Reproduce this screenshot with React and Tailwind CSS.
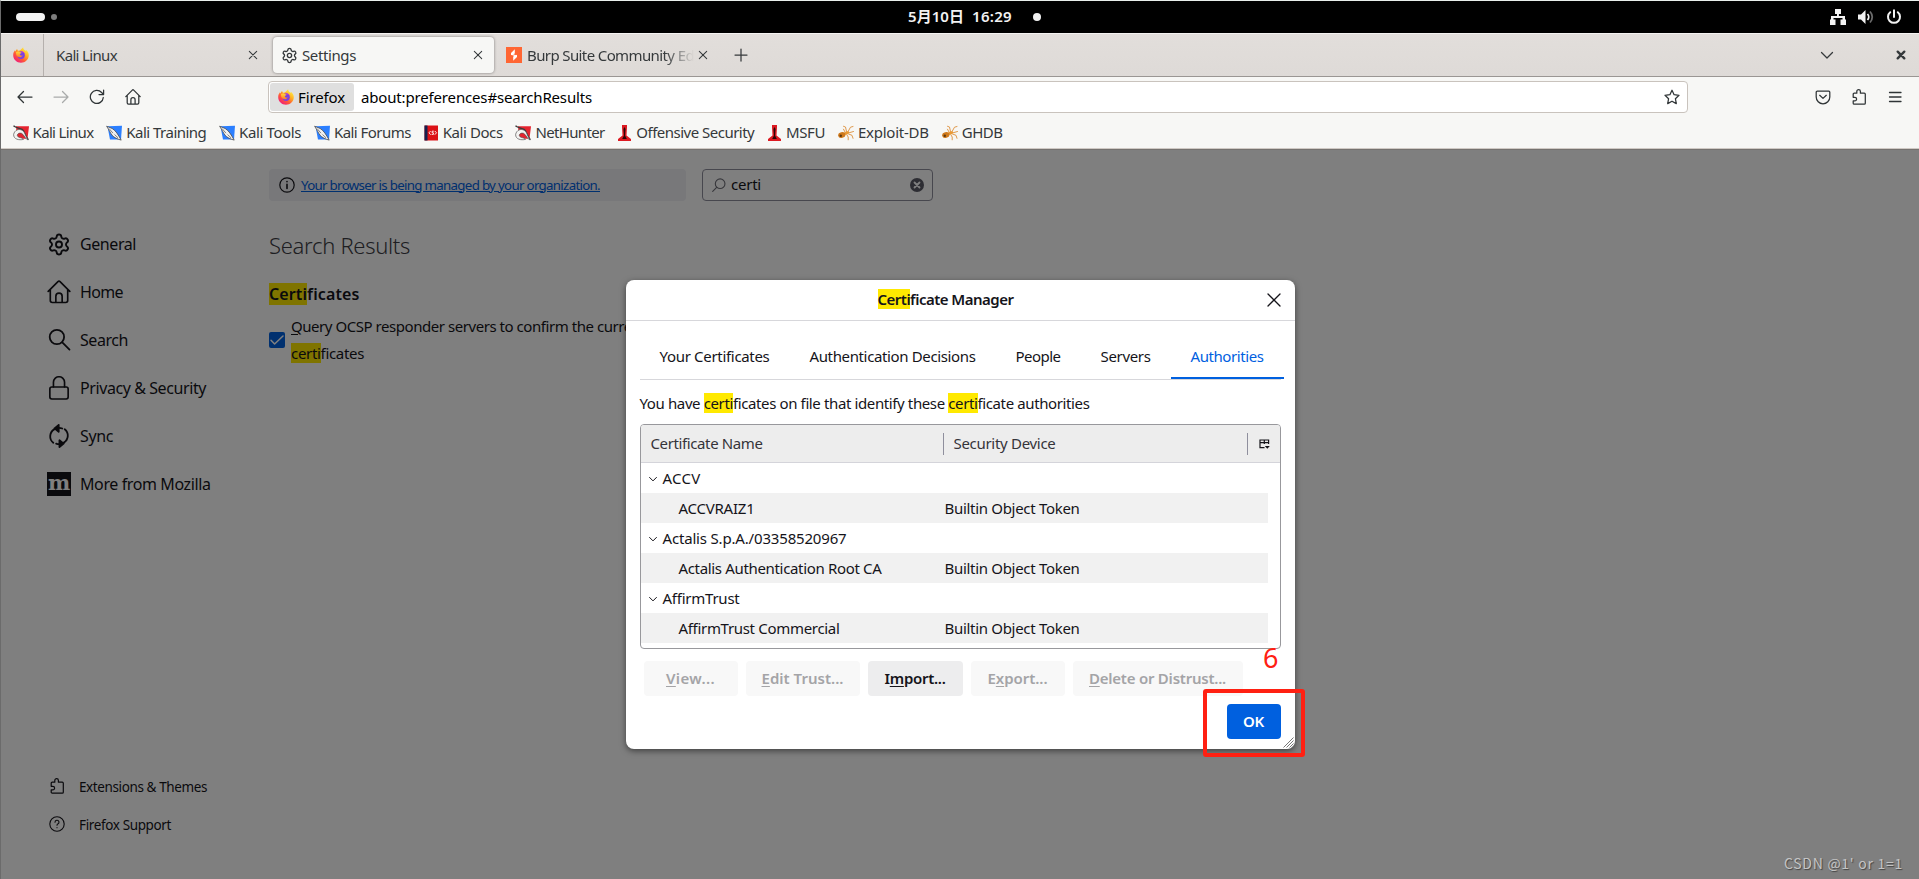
import { useLayoutEffect, useRef, useState } from "react";
import { Settings } from "lucide-react";

/* Single-line label whose letter spacing is adjusted to fill a given width. */
function Fit({ w, className = "", children }) {
  const ref = useRef(null);
  const [spacing, setSpacing] = useState(0);

  useLayoutEffect(() => {
    const el = ref.current;
    const natural = el.getBoundingClientRect().width;
    setSpacing((w - natural) / el.textContent.length);
  }, [w]);

  return (
    <span
      ref={ref}
      className={`inline-block shrink-0 whitespace-pre ${className}`}
      style={{ letterSpacing: `${spacing}px` }}
    >
      {children}
    </span>
  );
}

function Mark({ children }) {
  return <mark className="bg-[#ffe900] text-inherit">{children}</mark>;
}

function Stroke({ className = "", size = 16, width = 1.25, children }) {
  return (
    <svg
      className={`shrink-0 ${className}`}
      width={size}
      height={size}
      viewBox="0 0 16 16"
      fill="none"
      stroke="currentColor"
      strokeWidth={width}
      strokeLinecap="round"
      strokeLinejoin="round"
    >
      {children}
    </svg>
  );
}

function FirefoxLogo() {
  return (
    <svg className="size-4 shrink-0" viewBox="0 0 16 16">
      <defs>
        <linearGradient id="ff-body" x1="0.85" y1="0.1" x2="0.2" y2="0.95">
          <stop offset="0" stopColor="#fff04a" />
          <stop offset="0.35" stopColor="#ffae22" />
          <stop offset="0.65" stopColor="#ff5a36" />
          <stop offset="1" stopColor="#f0197c" />
        </linearGradient>
        <linearGradient id="ff-flame" x1="0.5" y1="0" x2="0.5" y2="1">
          <stop offset="0" stopColor="#ffd63b" />
          <stop offset="1" stopColor="#ff7a26" />
        </linearGradient>
      </defs>
      <path
        d="M10.2 0.2c0 1.8 1 2.5 2 3.3 0.6 0.3 1 0.2 1.1-0.5 1.6 1.4 2.5 3.3 2.5 5.3 0 4.2-3.5 7.5-7.8 7.5S0.2 12.5 0.2 8.3c0-2 0.6-3.5 1.7-5 0 0.5 0.2 0.9 0.5 1.2 0.3-1.1 0.9-2 1.8-2.6 0 0.8 0.3 1.5 0.9 1.9C7.6 3.6 8.6 1.6 10.2 0.2z"
        fill="url(#ff-body)"
      />
      <circle cx="8.1" cy="8.2" r="3.7" fill="#7a41e0" />
      <path d="M7 4.4c2.2-0.9 4.9 0.6 4.9 3.4 0-1-1-2-2.1-2z" fill="#b833e1" />
      <path
        d="M3 5.2c1-0.7 2.3-0.8 3.4-0.2 0.5 0.4 1.3 0.4 2.2 0.6-0.2 0.9-1.5 1-1.8 1.7 0 1.2 1.5 1.8 3 1-0.9 2-3.3 2.7-5.3 1.3C3.4 8.7 2.9 7 3 5.2z"
        fill="url(#ff-flame)"
      />
    </svg>
  );
}

function BurpLogo() {
  return (
    <svg className="size-4 shrink-0" viewBox="0 0 16 16">
      <rect width="16" height="16" fill="#ff6633" />
      <path d="M8.8 2.3v4.2L5 8.2V6zM7.2 13.7V9.5L11 7.8V10zM5 6.5l6 2v1.3l-6-2z" fill="#fff" />
    </svg>
  );
}

function DragonIcon() {
  return (
    <svg className="size-4 shrink-0" viewBox="0 0 16 16">
      <path d="M3 1.2h13l-1.5 12.5H4z" fill="#e5242f" />
      <path d="M0.5 0.8C3 3 6.5 3 9 4.5c2.8 1.8 2 5.5 6.3 10.3" fill="none" stroke="#3a3a3a" strokeWidth="1.5" />
      <path
        d="M0.6 9.5C1.5 5 6 3.2 9.5 5.5c2.8 2 2.5 5.5 5.7 9.3-3-0.3-3.7-5-6.7-6.5-3-0.9-5.2 1.5-3.7 3.2 1.5 1.6 4 0.7 5.7 2.9-4.5 1-9.9 0-9.9-4.9z"
        fill="#f4f4f2"
        stroke="#555"
        strokeWidth="0.7"
      />
    </svg>
  );
}

function KnifeIcon() {
  return (
    <svg className="size-4 shrink-0" viewBox="0 0 16 16">
      <path d="M1.5 1.2L16 0.8l-1 13.7H4z" fill="#2b7fff" />
      <path
        d="M0.6 1.2l5.6 2.3c3.6 2.2 5.7 5.8 9 11.6-3.9-1-7.2-2.6-9.1-4.8C4.4 8 2.8 4.5 0.6 1.2z"
        fill="#f1f1f1"
        stroke="#4c4c4c"
        strokeWidth="0.8"
      />
      <path d="M3 3.5l4 4.7M8.5 9.5l3.5 3.3" stroke="#777" strokeWidth="0.9" />
    </svg>
  );
}

function DocsIcon() {
  return (
    <svg className="h-4 w-[15px] shrink-0" viewBox="0 0 15 16">
      <path d="M0.5 0.5h13.5v15H0.5z" fill="#dc1216" />
      <path d="M0.5 0.5h3v15h-3z" fill="#15214f" />
      <path d="M6.6 6L5 7.8l1.6 1.9M10.8 6l1.7 1.8-1.7 1.9M9.8 6.2H8.1v1.6h1.3v1.6H7.6" fill="none" stroke="#fff" strokeWidth="0.9" />
    </svg>
  );
}

function OffsecIcon() {
  return (
    <svg className="h-4 w-[15px] shrink-0" viewBox="0 0 14 16">
      <path d="M4.5 0h5v2L9 10.5 13.5 14v2H0.5v-2L5 10.5 4.5 2z" fill="#dd1a22" />
      <path d="M7 2l1 2-0.5 6.5L9.3 14H4.7l1.8-3.5L6 4z" fill="#2b0507" />
    </svg>
  );
}

function BugIcon() {
  return (
    <svg className="size-4 shrink-0" viewBox="0 0 16 16" fill="none" stroke="#dd8f3a" strokeWidth="0.9" strokeLinecap="round">
      <path d="M7 7L5.5 4.2M8.5 6.5L7.5 2l-2-0.7M10 6.7l2.5-4.5 2.5-0.7M11 7.8l4.5-1.3M10.5 9l3.5 1.3 1 3M9 10l1.2 2v2.8" />
      <ellipse cx="8.6" cy="8" rx="2.7" ry="1.6" fill="#ea9a35" stroke="none" transform="rotate(-20 8.6 8)" />
      <ellipse cx="3.8" cy="10" rx="3.7" ry="2.8" fill="#d07a1c" stroke="none" transform="rotate(-15 3.8 10)" />
      <circle cx="2.8" cy="10.8" r="1.2" fill="#5b3812" stroke="none" />
    </svg>
  );
}

const HomeArt = () => (
  <path d="M0.8 7.6L7.3 1.1a1 1 0 0 1 1.4 0l6.5 6.5M2.2 6.5v7.2a1.3 1.3 0 0 0 1.3 1.3h9a1.3 1.3 0 0 0 1.3-1.3V6.5M5.9 15v-4.2a2.1 2.1 0 0 1 4.2 0V15" />
);
const CloseArt = () => <path d="M3.8 3.8l8.4 8.4M12.2 3.8l-8.4 8.4" />;
const ChevronArt = () => <path d="M2.5 5.5L8 11l5.5-5.5" />;
const PuzzleArt = () => (
  <path d="M2.2 7V5.2a1 1 0 0 1 1-1h2.6V2.5a1.7 1.7 0 0 1 3.6 0v1.7h3.9a1 1 0 0 1 1 1v9a1 1 0 0 1-1 1H3.2a1 1 0 0 1-1-1v-2.3h1.6a1.8 1.8 0 0 0 0-3.6h-1.6z" />
);

function TopBar() {
  return (
    <header className="flex h-8 items-center bg-black text-[#f2f2f2]">
      <div className="flex w-[907px] items-center gap-[6px] pl-[15px]">
        <span className="h-2 w-[29px] rounded-full bg-[#f2f2f2]" />
        <span className="size-[6px] rounded-full bg-[#7d7d7d]" />
      </div>
      <div className="flex items-center pb-px text-[15px] font-semibold">
        <Fit w={56}>5月10日</Fit>
        <Fit w={40} className="ml-2">16:29</Fit>
        <span className="ml-[21px] size-2 rounded-full bg-[#f2f2f2]" />
      </div>
      <div className="ml-auto flex items-center gap-3 pr-[17px]">
        <svg className="size-4" viewBox="0 0 16 16" fill="currentColor">
          <path d="M5 0h6v5H8.900v2H15v3.500h1V16h-5.500v-5.500h2V9h-9v1.500h2V16H0v-5.500h1V7h6V5H5z" />
        </svg>
        <svg className="size-4" viewBox="0 0 16 16">
          <path d="M0 5.500h3L7.500 1v14L3 10.500H0z" fill="currentColor" />
          <path d="M9.500 5c1.600 1.700 1.600 4.300 0 6" fill="none" stroke="currentColor" strokeWidth="1.8" />
          <path d="M12 2.500c3 3.200 3 7.800 0 11" fill="none" stroke="#6b6b6b" strokeWidth="1.8" />
        </svg>
        <Stroke width={2}>
          <path d="M4.200 3.200a6 6 0 1 0 7.600 0M8 1.200V8" />
        </Stroke>
      </div>
    </header>
  );
}

function TabStrip() {
  return (
    <div className="flex h-11 items-center border-t border-b border-t-[#f4f2f1] border-b-[#9a9693] bg-linear-to-b from-[#e2dedb] to-[#dedad7] text-[15px] text-[#35393b]">
      <div className="flex h-full w-[43px] items-center border-r border-[#b5b0ad] pl-3">
        <FirefoxLogo />
      </div>
      <div className="flex w-[229px] items-center pr-[13px] pl-3">
        <Fit w={61}>Kali Linux</Fit>
        <Stroke className="ml-auto" size={14} width={1.2}>
          <CloseArt />
        </Stroke>
      </div>
      <div className="flex h-9 w-[221px] items-center rounded bg-[#f7f7f5] pr-[9px] pl-2 shadow-[0_0_3px_rgba(0,0,0,0.45)]">
        <Settings size={17} strokeWidth={1.9} />
        <Fit w={54} className="ml-1">Settings</Fit>
        <Stroke className="ml-auto" size={14} width={1.2}>
          <CloseArt />
        </Stroke>
      </div>
      <div className="ml-3 flex items-center">
        <BurpLogo />
        <div className="ml-[5px] w-[167px] overflow-hidden mask-r-from-82% mask-r-to-100%">
          <Fit w={167}>Burp Suite Community Ed</Fit>
        </div>
        <Stroke className="ml-[2px]" size={14} width={1.2}>
          <CloseArt />
        </Stroke>
      </div>
      <Stroke className="ml-[23px]">
        <path d="M8 2v12M2 8h12" />
      </Stroke>
      <Stroke className="ml-auto">
        <ChevronArt />
      </Stroke>
      <Stroke className="mr-[10px] ml-[58px]" width={2.4}>
        <path d="M4.700 4.700l6.600 6.600M11.300 4.700l-6.600 6.600" />
      </Stroke>
    </div>
  );
}

function NavBar() {
  return (
    <div className="flex h-10 items-center text-[#2f3436]">
      <div className="flex w-[267px] items-center gap-5 pl-4">
        <Stroke>
          <path d="M15 8H1.300M6.500 2.500L1 8l5.500 5.500" />
        </Stroke>
        <Stroke className="text-[#a9abaa]">
          <path d="M1 8h13.700M9.500 2.500L15 8l-5.500 5.500" />
        </Stroke>
        <Stroke>
          <path d="M14.300 8.500a6.500 6.500 0 1 1-1.700-5l1.500 1.500M14.600 1v4.500H10" />
        </Stroke>
        <Stroke>
          <HomeArt />
        </Stroke>
      </div>
      <div className="flex h-8 w-[1420px] items-center rounded border border-[#c9c3bd] bg-white pr-[7px] pl-px text-[15px] text-black">
        <div className="flex h-7 w-[84px] items-center gap-1 rounded-[3px] bg-[#dfdfdf] pl-2">
          <FirefoxLogo />
          <Fit w={47}>Firefox</Fit>
        </div>
        <Fit w={231} className="ml-[7px]">about:preferences#searchResults</Fit>
        <Stroke className="ml-auto text-[#2f3436]">
          <path d="M8 1.200l2.100 4.500 4.900 0.600-3.600 3.400 0.900 4.900L8 12.200l-4.300 2.400 0.900-4.900L1 6.300l4.900-0.600z" />
        </Stroke>
      </div>
      <div className="ml-auto flex items-center gap-5 pr-4">
        <Stroke>
          <path d="M2.200 2.200h11.600a1 1 0 0 1 1 1V8a6.800 6.800 0 0 1-13.600 0V3.200a1 1 0 0 1 1-1zM4.700 6.300L8 9.400l3.300-3.100" />
        </Stroke>
        <Stroke>
          <PuzzleArt />
        </Stroke>
        <Stroke width={1.3}>
          <path d="M2.500 3.500h11.500M2.500 8h11.500M2.500 12.500h11.500" />
        </Stroke>
      </div>
    </div>
  );
}

const BOOKMARKS = [
  { label: "Kali Linux", width: 61, icon: <DragonIcon /> },
  { label: "Kali Training", width: 80, icon: <KnifeIcon /> },
  { label: "Kali Tools", width: 62, icon: <KnifeIcon /> },
  { label: "Kali Forums", width: 77, icon: <KnifeIcon /> },
  { label: "Kali Docs", width: 60, icon: <DocsIcon /> },
  { label: "NetHunter", width: 69, icon: <DragonIcon /> },
  { label: "Offensive Security", width: 118, icon: <OffsecIcon /> },
  { label: "MSFU", width: 39, icon: <OffsecIcon /> },
  { label: "Exploit-DB", width: 71, icon: <BugIcon /> },
  { label: "GHDB", width: 41, icon: <BugIcon /> },
];

function BookmarksBar() {
  return (
    <div className="flex h-8 items-center gap-[12.8px] border-b border-[#cfc9c4] pl-[11.5px] text-[15px] text-[#35393b]">
      {BOOKMARKS.map(({ label, width, icon }) => (
        <div key={label} className="flex items-center gap-1">
          {icon}
          <Fit w={width}>{label}</Fit>
        </div>
      ))}
    </div>
  );
}

const CATEGORIES = [
  { label: "General", width: 56, icon: <Settings size={25} strokeWidth={1.9} /> },
  { label: "Home", width: 43, icon: <Stroke size={24} width={1.1}><HomeArt /></Stroke> },
  {
    label: "Search",
    width: 48,
    icon: (
      <Stroke size={24} width={1.2}>
        <circle cx="6.6" cy="6" r="4.8" />
        <path d="M10.200 9.600l4.800 4.800" />
      </Stroke>
    ),
  },
  {
    label: "Privacy & Security",
    width: 126,
    icon: (
      <Stroke size={24} width={1.1}>
        <rect x="1.9" y="7.3" width="12.2" height="8" rx="1.3" />
        <path d="M4.300 7.300V4.200a3.700 3.700 0 0 1 7.400 0v3.100" />
      </Stroke>
    ),
  },
  {
    label: "Sync",
    width: 33,
    icon: (
      <Stroke size={24} width={1.2}>
        <path d="M4.200 12.500A5.400 5.400 0 0 1 4.800 3.600M11.800 3.500a5.400 5.400 0 0 1-0.600 8.900M6.500 2.700c1.300-0.300 2.600-0.200 3.700 0.300M9.500 13.300c-1.200 0.300-2.400 0.200-3.400-0.200" />
        <path d="M7.800 0.600v4.600L5 2.900zM8.300 10.800v4.600l2.800-2.300z" fill="currentColor" />
      </Stroke>
    ),
  },
  {
    label: "More from Mozilla",
    width: 130.5,
    icon: (
      <span className="flex size-6 items-center justify-center bg-[#15141a] pb-[3px] font-['DejaVu_Serif'] text-[21px] leading-none font-bold text-white">
        m
      </span>
    ),
  },
];

function Sidebar() {
  return (
    <nav className="flex w-[268px] shrink-0 flex-col pt-[70px] pb-[35px] pl-[46px]">
      {CATEGORIES.map(({ label, width, icon }) => (
        <div key={label} className="flex h-12 items-center gap-[9px] text-base">
          <span className="flex w-6 justify-center">{icon}</span>
          <Fit w={width}>{label}</Fit>
        </div>
      ))}
      <div className="mt-auto flex h-[38px] items-center gap-[14px] pl-[2px] text-[13.5px]">
        <Stroke width={1.2} className="mb-[2px]">
          <PuzzleArt />
        </Stroke>
        <Fit w={128}>Extensions &amp; Themes</Fit>
      </div>
      <div className="flex h-[38px] items-center gap-[14px] pl-[2px] text-[13.5px]">
        <Stroke width={1.1} className="mb-[2px]">
          <circle cx="8" cy="8" r="7.2" />
          <path d="M6 6.300a2 2 0 1 1 2.800 1.800C8.200 8.400 8 8.700 8 9.300M8 11.600v0.200" />
        </Stroke>
        <Fit w={92}>Firefox Support</Fit>
      </div>
    </nav>
  );
}

function SearchPane() {
  return (
    <main className="flex flex-col pt-[19px]">
      <div className="flex gap-4">
        <div className="flex h-8 w-[417px] items-center gap-[6px] rounded bg-[#f0f0f4] pl-[10px] text-[13.3px]">
          <Stroke width={1.2}>
            <circle cx="8" cy="8" r="7.2" />
            <path d="M8 7.300v4.200M8 4.500v0.300" strokeWidth="1.6" />
          </Stroke>
          <Fit w={299} className="pt-px text-[#0060df] underline">Your browser is being managed by your organization.</Fit>
        </div>
        <div className="flex h-8 w-[231px] items-center rounded border border-[#8f8f9d] pr-2 pl-[9px] text-[15px]">
          <Stroke size={14} width={1.3} className="text-[#6f6f78]">
            <circle cx="9.3" cy="6.5" r="5.5" />
            <path d="M5.300 10.700L0.800 15.200" />
          </Stroke>
          <Fit w={30} className="ml-[5px] pb-px">certi</Fit>
          <svg className="ml-auto size-[14px]" viewBox="0 0 14 14">
            <circle cx="7" cy="7" r="7" fill="#5b5b66" />
            <path d="M4.500 4.500l5 5M9.500 4.500l-5 5" stroke="#fff" strokeWidth="1.8" strokeLinecap="round" />
          </svg>
        </div>
      </div>
      <h1 className="mt-7 h-8 text-[22px] leading-8 font-light">
        <Fit w={141} className="text-[#3c3c44]">Search Results</Fit>
      </h1>
      <h2 className="mt-[21px] h-6 text-base leading-6 font-semibold">
        <Fit w={90.5} className="leading-[21px]"><Mark>Certi</Mark>ficates</Fit>
      </h2>
      <div className="mt-[7px] flex items-center gap-[6px] text-[15px] leading-[27px]">
        <span className="flex size-4 items-center justify-center rounded-[2px] bg-[#0060df] text-white">
          <Stroke width={1.5}>
            <path d="M2 8.200l3.600 3.800L14 4" />
          </Stroke>
        </span>
        <div className="flex flex-col items-start">
          <Fit w={421}>
            <span className="underline underline-offset-2">Q</span>uery OCSP responder servers to confirm the current validity of
          </Fit>
          <Fit w={73}><Mark>certi</Mark>ficates</Fit>
        </div>
      </div>
    </main>
  );
}

const TABS = [
  { label: "Your Certificates", width: 110 },
  { label: "Authentication Decisions", width: 166 },
  { label: "People", width: 45 },
  { label: "Servers", width: 50 },
  { label: "Authorities", width: 73, active: true },
];

const AUTHORITIES = [
  { org: "ACCV", orgWidth: 38, cert: "ACCVRAIZ1", certWidth: 76 },
  { org: "Actalis S.p.A./03358520967", orgWidth: 184, cert: "Actalis Authentication Root CA", certWidth: 203 },
  { org: "AffirmTrust", orgWidth: 77, cert: "AffirmTrust Commercial", certWidth: 161 },
];

function CertificateTable() {
  return (
    <div className="h-[225px] overflow-hidden rounded border border-[#98989c]">
      <div className="flex h-[38px] items-center border-b border-[#d4d4da] bg-[#ededed] pl-[10px] text-[#35343a]">
        <Fit w={112}>Certificate Name</Fit>
        <span className="ml-auto h-[22px] w-px bg-[#8f8f9d]" />
        <div className="flex w-[303px] items-center pl-[10px]">
          <Fit w={102}>Security Device</Fit>
        </div>
        <span className="h-[22px] w-px bg-[#8f8f9d]" />
        <svg className="mt-[2px] mr-[10px] ml-[11px] size-[11px] text-[#15141a]" viewBox="0 0 11 11" fill="none" stroke="currentColor" strokeWidth="1.2">
          <path d="M9.600 5V1H1v7.600h4.500M1 3.600h8.600M5.300 1v4" />
          <path d="M5.800 7h5L8.300 9.800z" fill="currentColor" stroke="none" />
        </svg>
      </div>
      {AUTHORITIES.map(({ org, orgWidth, cert, certWidth }) => (
        <div key={org} className="pr-3">
          <div className="flex h-[30px] items-center gap-[5px] pl-[7px]">
            <Stroke size={10} width={1.6} className="mt-px">
              <ChevronArt />
            </Stroke>
            <Fit w={orgWidth}>{org}</Fit>
          </div>
          <div className="flex h-[30px] items-center bg-[#f1f1f1] pl-[38px]">
            <div className="w-[266px]">
              <Fit w={certWidth}>{cert}</Fit>
            </div>
            <Fit w={135}>Builtin Object Token</Fit>
          </div>
        </div>
      ))}
    </div>
  );
}

const ACTIONS = [
  { before: "", key: "V", after: "iew...", width: 49, box: "w-[94px]" },
  { before: "", key: "E", after: "dit Trust...", width: 82, box: "w-[114px]" },
  { before: "I", key: "m", after: "port...", width: 61, box: "w-[95px]", enabled: true },
  { before: "E", key: "x", after: "port...", width: 60, box: "w-[94px]" },
  { before: "", key: "D", after: "elete or Distrust...", width: 137, box: "w-[170px]" },
];

function CertificateManager() {
  return (
    <section className="relative flex h-[469px] w-[669px] flex-col rounded-lg bg-white text-[15px] text-[#15141a] shadow-[0_2px_6px_rgba(0,0,0,0.5)]">
      <div className="relative flex h-[41px] items-center justify-center border-b border-[#d7d7db] font-semibold">
        <Fit w={136} className="mr-[29px] pb-[2px] leading-[19px]"><Mark>Certi</Mark>ficate Manager</Fit>
        <Stroke className="absolute right-[13px]" width={1.3}>
          <path d="M2 2l12 12M14 2L2 14" />
        </Stroke>
      </div>
      <div className="mx-[14px] mt-[16px] flex h-[43px] border-b border-[#d7d7db]">
        {TABS.map(({ label, width, active }) => (
          <div
            key={label}
            className={`flex h-[42px] shrink-0 items-center border-b-2 px-5 pb-[2px] ${
              active ? "border-[#0060df] text-[#0060df]" : "border-transparent"
            }`}
          >
            <Fit w={width}>{label}</Fit>
          </div>
        ))}
      </div>
      <div className="mx-[14px] flex h-[44px] items-center pt-[3px]">
        <Fit w={450} className="leading-[19px]">
          You have <Mark>certi</Mark>ficates on file that identify these <Mark>certi</Mark>ficate authorities
        </Fit>
      </div>
      <div className="mx-[14px]">
        <CertificateTable />
      </div>
      <div className="mt-3 ml-[18px] flex gap-2 font-semibold">
        {ACTIONS.map(({ before, key, after, width, box, enabled }) => (
          <button
            key={after + key}
            className={`flex h-[35px] items-center justify-center rounded pb-px ${box} ${
              enabled ? "bg-[#ededee]" : "bg-[#f8f8f8] text-[#a4a4a7]"
            }`}
          >
            <Fit w={width}>
              {before}
              <span className="underline underline-offset-2">{key}</span>
              {after}
            </Fit>
          </button>
        ))}
      </div>
      <button className="mt-2 mr-[14px] flex h-[35px] w-[54px] items-center justify-center self-end rounded bg-[#0060df] pb-px font-semibold text-white">
        <Fit w={21}>OK</Fit>
      </button>
      <svg className="absolute right-px bottom-px size-[11px]" viewBox="0 0 11 11" stroke="#777" strokeWidth="1">
        <path d="M0.500 10.500l10-10M3.500 10.500l7-7M6.500 10.500l4-4M9 10.500l1.500-1.500" />
      </svg>
    </section>
  );
}

export default function App() {
  return (
    <div className="relative flex h-[879px] w-[1919px] flex-col overflow-hidden border-t border-l border-t-[#e9efec] border-l-[#6b6b6b] bg-[#f7f7f5] font-['Noto_Sans','Noto_Sans_CJK_SC',sans-serif]">
      <TopBar />
      <TabStrip />
      <NavBar />
      <BookmarksBar />
      <div className="relative flex flex-1 border-t border-[#75726f] bg-white text-[#15141a]">
        <Sidebar />
        <SearchPane />
        <div className="absolute inset-0 flex items-center justify-center bg-black/50">
          <CertificateManager />
        </div>
      </div>

      {/* step annotation */}
      <span className="absolute top-[639px] left-[1262px] text-[27px] leading-9 text-[#ff2012]">6</span>
      <div className="absolute top-[688px] left-[1202px] h-[68px] w-[102px] rounded-[3px] border-4 border-[#ff2012]" />

      <span className="absolute right-4 bottom-[6px] font-['Noto_Sans_CJK_SC'] text-[14px] leading-5 text-[#c4c4c4] [text-shadow:1px_1px_1px_#444]">
        <Fit w={119}>CSDN @1' or 1=1</Fit>
      </span>
    </div>
  );
}
